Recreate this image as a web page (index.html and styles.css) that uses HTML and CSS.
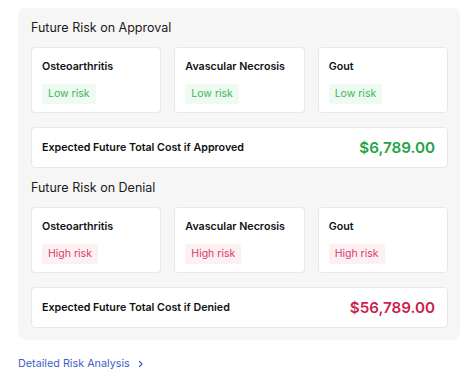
FILE: index.html
```html
<!DOCTYPE html>
<html lang="en">
<head>
  <meta charset="UTF-8">
  <title>Future Risk</title>
  <link rel="stylesheet" href="styles.css">
</head>
<body>
  <div class="panel">
    <!-- Approval -->
    <div class="section-title">Future Risk on Approval</div>
    <div class="risk-row">
      <div class="risk-card">
        <div class="risk-name">Osteoarthritis</div>
        <span class="badge low">Low risk</span>
      </div>
      <div class="risk-card">
        <div class="risk-name">Avascular Necrosis</div>
        <span class="badge low">Low risk</span>
      </div>
      <div class="risk-card">
        <div class="risk-name">Gout</div>
        <span class="badge low">Low risk</span>
      </div>
    </div>
    <div class="cost-card">
      <span class="cost-label">Expected Future Total Cost if Approved</span>
      <span class="cost-value green">$6,789.00</span>
    </div>

    <!-- Denial -->
    <div class="section-title">Future Risk on Denial</div>
    <div class="risk-row">
      <div class="risk-card">
        <div class="risk-name">Osteoarthritis</div>
        <span class="badge high">High risk</span>
      </div>
      <div class="risk-card">
        <div class="risk-name">Avascular Necrosis</div>
        <span class="badge high">High risk</span>
      </div>
      <div class="risk-card">
        <div class="risk-name">Gout</div>
        <span class="badge high">High risk</span>
      </div>
    </div>
    <div class="cost-card">
      <span class="cost-label">Expected Future Total Cost if Denied</span>
      <span class="cost-value red">$56,789.00</span>
    </div>
  </div>

  <a class="detail-link" href="#">Detailed Risk Analysis
    <svg width="8" height="8" viewBox="0 0 8 8"><path d="M2.5 1.5 L5 4 L2.5 6.5" fill="none" stroke="currentColor" stroke-width="1.3" stroke-linecap="round" stroke-linejoin="round"/></svg>
  </a>
</body>
</html>
```

FILE: styles.css
```css
body {
  margin: 0;
  padding: 8px 14px 0 18px;
  font-family: Inter, 'Noto Sans', sans-serif;
  color: #111;
  background: #fff;
}
.panel {
  background-color: #f6f6f6;
  border-radius: 8px;
  padding: 12px 12px 12px 13px;
}
.section-title {
  font-size: 12.5px;
  line-height: 16px;
  color: #1a1a1a;
  margin-bottom: 11px;
}
.risk-row {
  display: grid;
  grid-template-columns: 1fr 1fr 1fr;
  gap: 13px;
  margin-bottom: 14px;
}
.risk-card {
  background: #fff;
  border: 1px solid #e8e8e8;
  border-radius: 4px;
  padding: 12px 10px 11px 10px;
  height: 41px;
}
.risk-name {
  font-size: 10.7px;
  font-weight: 600;
  line-height: 14px;
  margin-bottom: 7px;
  white-space: nowrap;
}
.badge {
  display: inline-block;
  font-size: 10.5px;
  line-height: 20px;
  padding: 0 6px;
  border-radius: 2px;
}
.badge.low {
  color: #3bb55a;
  background: #effaf1;
}
.badge.high {
  color: #d63c66;
  background: #fdf0f3;
}
.cost-card {
  background: #fff;
  border: 1px solid #e8e8e8;
  border-radius: 4px;
  display: flex;
  justify-content: space-between;
  align-items: center;
  padding: 0 12px 0 10px;
  height: 39px;
  margin-bottom: 12px;
}
.cost-card:last-child {
  margin-bottom: 0;
}
.cost-label {
  font-size: 10.7px;
  font-weight: 600;
}
.cost-value {
  font-size: 15.2px;
  font-weight: 600;
}
.cost-value.green {
  color: #22a447;
}
.cost-value.red {
  color: #cc1f4e;
}
.detail-link {
  display: inline-flex;
  align-items: center;
  gap: 7px;
  margin-top: 17px;
  font-size: 10.8px;
  color: #3e5fc8;
  text-decoration: none;
}
```
